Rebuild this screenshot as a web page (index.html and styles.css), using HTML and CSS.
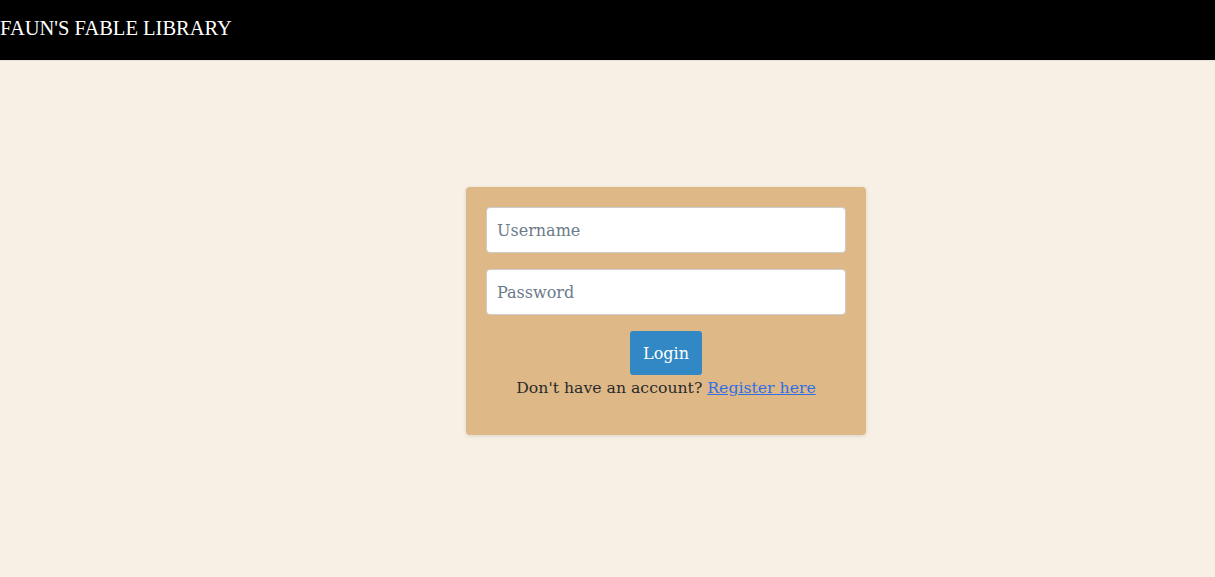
FILE: index.html
```html
<!DOCTYPE html>
<html lang="en">
<head>
<meta charset="utf-8">
<title>Faun's Fable Library - Login</title>
<link rel="stylesheet" href="styles.css">
</head>
<body>
<header class="topbar">
  <span class="brand">FAUN'S FABLE LIBRARY</span>
</header>
<main class="page">
  <form class="card">
    <input class="field" type="text" placeholder="Username">
    <input class="field" type="password" placeholder="Password">
    <button class="btn" type="button">Login</button>
    <p class="note">Don't have an account? <a href="#">Register here</a></p>
  </form>
</main>
</body>
</html>
```
FILE: styles.css
```css
html, body {
  margin: 0;
  padding: 0;
}
body {
  background: #f8f0e5;
  font-family: "DejaVu Serif", "Liberation Serif", serif;
  color: #333;
  height: 577px;
  overflow: hidden;
}
.topbar {
  background: #000;
  height: 60px;
  display: flex;
  align-items: center;
  border-bottom: 1px solid #e9e2d8;
}
.brand {
  font-family: "Liberation Serif", serif;
  font-size: 20.5px;
  color: #fff;
  margin-top: -4px;
}
.page {
  display: flex;
  padding-top: 126px;
  padding-left: 466px;
}
.card {
  width: 400px;
  box-sizing: border-box;
  background: #deb887;
  border-radius: 4px;
  box-shadow: 0 1px 4px rgba(0,0,0,0.12);
  padding: 20px 20px 37px;
  display: flex;
  flex-direction: column;
  align-items: center;
}
.field {
  width: 100%;
  box-sizing: border-box;
  height: 46px;
  border: 1px solid #ccc;
  border-radius: 4px;
  background: #fff;
  padding: 0 10px;
  font-family: "DejaVu Serif", serif;
  font-size: 16px;
  color: #333;
  margin-bottom: 16px;
}
.field::placeholder {
  color: #6c7a8a;
}
.btn {
  width: 72px;
  height: 44px;
  background: #3188c4;
  color: #fff;
  border: none;
  border-radius: 3px;
  font-family: "DejaVu Serif", serif;
  font-size: 16px;
  padding: 0;
}
.note {
  margin: 3px 0 0;
  font-size: 15.7px;
  line-height: 20px;
  color: #2a2a2a;
}
.note a {
  color: #2f6fe6;
  text-decoration: underline;
}
```
